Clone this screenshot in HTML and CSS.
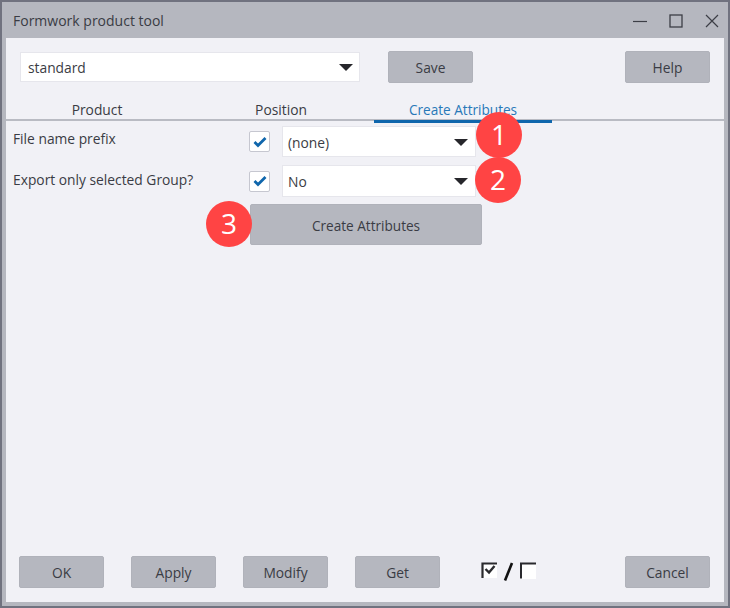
FILE: index.html
```html
<!DOCTYPE html>
<html lang="en">
<head>
<meta charset="utf-8">
<title>Formwork product tool</title>
<link rel="stylesheet" href="styles.css">
</head>
<body>
<div class="window">
  <header class="titlebar">
    <span class="title">Formwork product tool</span>
    <div class="controls">
      <svg class="ctl" width="14" height="14" viewBox="0 0 14 14"><path d="M0 7.500h14" stroke="#3c3e46" stroke-width="1.200" fill="none"/></svg>
      <svg class="ctl" width="14" height="14" viewBox="0 0 14 14"><rect x="1" y="1" width="12" height="12" stroke="#3c3e46" stroke-width="1.300" fill="none"/></svg>
      <svg class="ctl" width="14" height="14" viewBox="0 0 14 14"><path d="M1 1l12 12M13 1L1 13" stroke="#3c3e46" stroke-width="1.200" fill="none"/></svg>
    </div>
  </header>
  <main class="content">
    <div class="toolbar">
      <div class="select select-preset"><span>standard</span><i class="arrow"></i></div>
      <button class="btn btn-save">Save</button>
      <button class="btn btn-help">Help</button>
    </div>
    <nav class="tabs">
      <span class="tab tab-product">Product</span>
      <span class="tab tab-position">Position</span>
      <span class="tab tab-active">Create Attributes</span>
    </nav>
    <section class="form">
      <div class="row row-first">
        <label class="label label-first">File name prefix</label>
        <span class="check"><svg width="14" height="12" viewBox="0 0 14 12"><path d="M1.500 6l3.500 3.500 7.500-7.500" stroke="#0f66ac" stroke-width="2.800" fill="none"/></svg></span>
        <div class="select select-row"><span>(none)</span><i class="arrow"></i></div>
        <b class="badge badge-1">1</b>
      </div>
      <div class="row row-second">
        <label class="label">Export only selected Group?</label>
        <span class="check"><svg width="14" height="12" viewBox="0 0 14 12"><path d="M1.500 6l3.500 3.500 7.500-7.500" stroke="#0f66ac" stroke-width="2.800" fill="none"/></svg></span>
        <div class="select select-row"><span>No</span><i class="arrow"></i></div>
        <b class="badge badge-2">2</b>
      </div>
      <div class="row-action">
        <button class="btn btn-create">Create Attributes</button>
        <b class="badge badge-3">3</b>
      </div>
    </section>
    <footer class="footer">
      <button class="btn">OK</button>
      <button class="btn">Apply</button>
      <button class="btn">Modify</button>
      <button class="btn">Get</button>
      <svg class="toggle" width="58" height="22" viewBox="0 0 58 22">
        <rect x="1" y="1" width="15" height="15" fill="#fff"/>
        <path d="M1.500 16V1.500H16" stroke="#2a2a2e" stroke-width="2.200" fill="none"/>
        <path d="M4.500 7l3.500 3.500 5.500-6.500" stroke="#2a2a2e" stroke-width="2.400" fill="none"/>
        <path d="M31 1l-7 17.500" stroke="#111" stroke-width="2.600" fill="none"/>
        <rect x="39" y="1" width="16" height="16" fill="#fff"/>
        <path d="M40 16.500V1.500h15" stroke="#2a2a2e" stroke-width="2" fill="none"/>
      </svg>
      <button class="btn btn-cancel">Cancel</button>
    </footer>
  </main>
</div>
</body>
</html>
```
FILE: styles.css
```css
* { box-sizing: border-box; }
html, body { margin: 0; padding: 0; }
body {
  width: 730px;
  height: 608px;
  overflow: hidden;
  font-family: "Open Sans", "Noto Sans", sans-serif;
  font-size: 13.8px;
  color: #3a3c44;
  background: #fff;
}
.window {
  width: 730px;
  height: 608px;
  display: flex;
  flex-direction: column;
  border: 2px solid #70727f;
  background: #b5b7bf;
  padding: 0 4px 4px 4px;
}
.titlebar {
  height: 36px;
  flex: none;
  display: flex;
  align-items: center;
  justify-content: space-between;
  padding: 1px 5px 0 7px;
}
.title { font-size: 14px; color: #3a3c44; }
.controls { display: flex; gap: 22px; align-items: center; }
.content {
  flex: 1;
  position: relative;
  display: flex;
  flex-direction: column;
  background: #f1f1f6;
}
.toolbar {
  display: flex;
  align-items: center;
  padding: 13px 14px 0 14px;
}
.select {
  display: flex;
  align-items: center;
  justify-content: space-between;
  background: #fff;
  border: 1px solid #e6e6ec;
  color: #3a3c44;
}
.select-preset { width: 340px; height: 30px; padding: 1px 5px 0 7px; margin-right: 28px; }
.select-row { width: 194px; height: 100%; padding: 1px 6px 0 5px; margin-left: 12px; }
.arrow {
  width: 0;
  height: 0;
  border-left: 7px solid transparent;
  border-right: 7px solid transparent;
  border-top: 7px solid #26262b;
  margin-right: 1px;
}
.btn {
  width: 85px;
  height: 32px;
  padding: 0;
  border: 1px solid #b0b2ba;
  border-radius: 2px;
  background: #b5b7bf;
  color: #3a3c44;
  font: inherit;
}
.btn-help { margin-left: auto; }
.tabs {
  display: flex;
  height: 38px;
  border-bottom: 2px solid #b9bbc3;
  position: relative;
}
.tab { position: relative; top: 17px; height: 20px; line-height: 20px; text-align: center; }
.tab-product { width: 182px; }
.tab-position { width: 186px; }
.tab-active {
  width: 178px;
  font-size: 13.6px;
  color: #2878b8;
  border-bottom: 3px solid #0f66ac;
  height: 23px;
  top: 17px;
}
.form { position: relative; padding-left: 7px; }
.row { display: flex; align-items: center; position: relative; }
.row-first { height: 31px; margin-top: 5px; }
.row-second { height: 32px; margin-top: 8px; }
.label { width: 236px; position: relative; top: -2px; }
.label-first { top: -3px; }
.check {
  width: 21px;
  height: 21px;
  flex: none;
  display: flex;
  align-items: center;
  justify-content: center;
  background: #fff;
  border: 1px solid #c6c7d0;
  border-radius: 2px;
}
.row-action { display: flex; margin: 7px 0 0 237px; position: relative; }
.btn-create { width: 232px; height: 41px; padding-top: 1px; font-size: 13.6px; }
.badge {
  position: absolute;
  width: 46px;
  height: 46px;
  border-radius: 50%;
  background: #ff4444;
  color: #fff;
  font-weight: 400;
  font-size: 28px;
  line-height: 44px;
  text-align: center;
}
.badge-1 { left: 463px; top: -14px; }
.badge-2 { left: 462px; top: -8px; }
.badge-3 { left: -44px; top: -3px; }
.footer {
  margin-top: auto;
  display: flex;
  align-items: center;
  gap: 27px;
  padding: 0 14px 14px 13px;
}
.toggle { margin-left: 14px; flex: none; margin-top: 2px; }
.btn-cancel { margin-left: auto; }
```
